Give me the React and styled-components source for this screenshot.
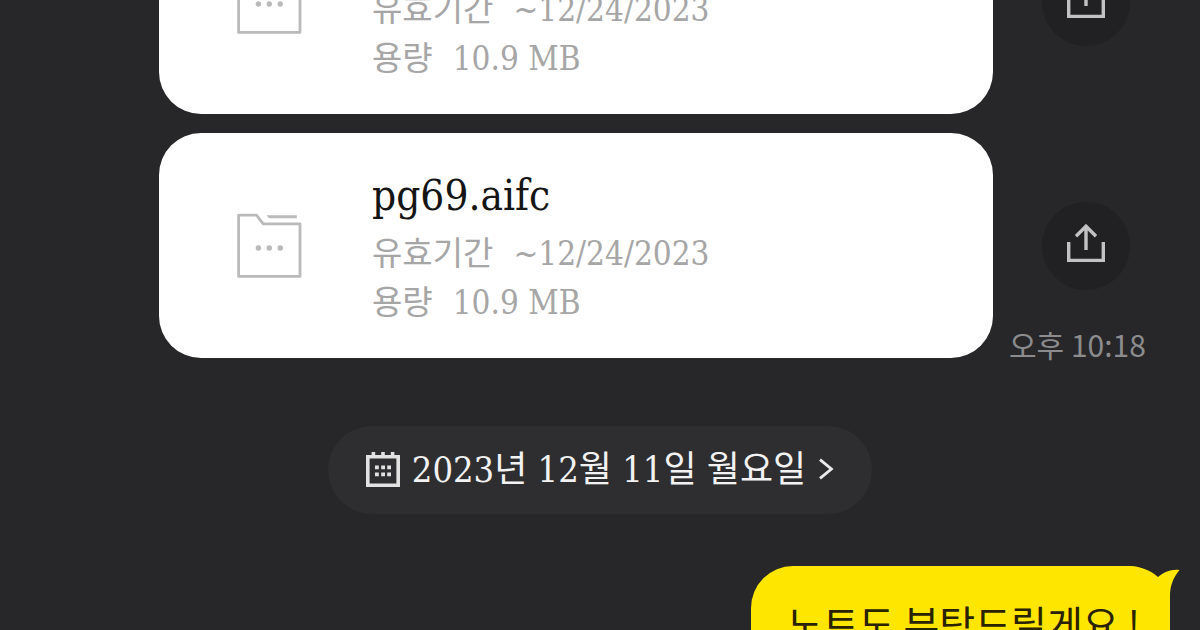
import React from "react";
import styled, { createGlobalStyle } from "styled-components";

const files = [
  { id: 1, name: "pg68.aifc", expires: "~12/24/2023", size: "10.9 MB" },
  { id: 2, name: "pg69.aifc", expires: "~12/24/2023", size: "10.9 MB", time: "오후 10:18" },
];

export default function App() {
  return (
    <>
      <GlobalStyle />
      <ChatRoom>
        <FileList>
          {files.map((file) => (
            <FileMessage key={file.id} file={file} />
          ))}
        </FileList>
        <DateButton type="button">
          <CalendarIcon />
          <span>2023년 12월 11일 월요일</span>
          <ChevronIcon />
        </DateButton>
        <MyMessage>
          노트도 부탁드릴게요 !
          <BubbleTail />
        </MyMessage>
      </ChatRoom>
    </>
  );
}

function FileMessage({ file }) {
  return (
    <FileRow>
      <FileCard>
        <FolderIcon />
        <div>
          <FileName>{file.name}</FileName>
          <FileInfo>
            <span>유효기간</span>
            <span>{file.expires}</span>
          </FileInfo>
          <FileInfo>
            <span>용량</span>
            <span>{file.size}</span>
          </FileInfo>
        </div>
      </FileCard>
      <FileSide>
        <ShareButton type="button" aria-label="공유">
          <ShareIcon />
        </ShareButton>
        {file.time && <Time>{file.time}</Time>}
      </FileSide>
    </FileRow>
  );
}

function FolderIcon() {
  return (
    <svg width="66" height="68" viewBox="0 0 66 68" fill="none" aria-hidden="true">
      <path
        d="M2.6 2.2H20.5L27.2 10.8H64V63.4H2.6Z"
        stroke="#bababa"
        strokeWidth="2.8"
        strokeLinejoin="round"
      />
      <path d="M30.6 2.2H60.8V5.2H33Z" fill="#bababa" />
      <circle cx="22.4" cy="35" r="2.7" fill="#bababa" />
      <circle cx="33.3" cy="35" r="2.7" fill="#bababa" />
      <circle cx="44.2" cy="35" r="2.7" fill="#bababa" />
    </svg>
  );
}

function ShareIcon() {
  return (
    <svg width="44" height="44" viewBox="0 0 44 44" fill="none" aria-hidden="true">
      <path
        d="M4.7 18V36.4H39.3V18M22 26V2.2M12 12.2L22 2.2L32 12.2"
        stroke="#c2c2c4"
        strokeWidth="3.4"
      />
    </svg>
  );
}

function CalendarIcon() {
  return (
    <svg width="34" height="36" viewBox="0 0 34 36" fill="none" aria-hidden="true">
      <path d="M1.8 4.8H32.2V33.2H1.8Z" stroke="#e2e2e2" strokeWidth="3.6" />
      <path
        d="M7.4 0V4M17 0V4M26.6 0V4"
        stroke="#e2e2e2"
        strokeWidth="3.6"
      />
      <path
        d="M9 15.4H12.8M15.2 15.4H19M21.2 15.4H25M9 22.4H12.8M15.2 22.4H19M21.2 22.4H25"
        stroke="#e2e2e2"
        strokeWidth="3.8"
      />
    </svg>
  );
}

function ChevronIcon() {
  return (
    <svg width="16" height="24" viewBox="0 0 16 24" fill="none" aria-hidden="true">
      <path d="M2 1.6L13.4 11L2 20.4" stroke="#ececec" strokeWidth="2.8" />
    </svg>
  );
}

function BubbleTail() {
  return (
    <Tail width="52" height="44" viewBox="0 0 52 44" aria-hidden="true">
      <path
        d="M0 0C12 0 22 4 30 11C36 6 43 3 51.5 4C45 12 42 20 42 30V44H0Z"
        fill="#ffe600"
      />
    </Tail>
  );
}

const GlobalStyle = createGlobalStyle`
  * {
    box-sizing: border-box;
  }
  body {
    margin: 0;
    background: #272729;
    font-family: "DejaVu Serif Condensed", "Noto Sans CJK KR", serif;
  }
  button {
    border: 0;
    padding: 0;
    font: inherit;
    cursor: pointer;
  }
`;

const ChatRoom = styled.main`
  display: flex;
  flex-direction: column;
  height: 100vh;
  overflow: hidden;
`;

/* scrolled so that the first card is cut by the top edge */
const FileList = styled.section`
  display: flex;
  flex-direction: column;
  flex-shrink: 0;
  gap: 19px;
  margin-top: -111px;
`;

const FileRow = styled.article`
  display: grid;
  grid-template-columns: 1fr 191px;
  gap: 16px;
  padding-left: 159px;
`;

const FileCard = styled.div`
  display: flex;
  align-items: center;
  gap: 70px;
  padding: 33px 77px 31px;
  border-radius: 42px;
  background: #ffffff;
`;

const FileName = styled.h2`
  margin: 0 0 3px;
  color: #151515;
  font-size: 42px;
  font-weight: 400;
  line-height: 60px;
`;

const FileInfo = styled.p`
  display: flex;
  gap: 20px;
  margin: 0;
  color: #a6a6a6;
  font-size: 33px;
  line-height: 49px;
`;

const FileSide = styled.div`
  display: grid;
  grid-template-rows: 1fr auto 1fr;
`;

const ShareButton = styled.button`
  display: flex;
  grid-row: 2;
  align-items: center;
  justify-content: center;
  width: 88px;
  height: 88px;
  margin-left: 33px;
  border-radius: 50%;
  background: #212123;
`;

const Time = styled.time`
  grid-row: 3;
  align-self: end;
  color: #8c8c8e;
  font-family: "Noto Sans CJK KR", sans-serif;
  font-size: 30px;
  line-height: 28px;
`;

const DateButton = styled.button`
  display: flex;
  flex-shrink: 0;
  align-items: center;
  align-self: center;
  gap: 12px;
  height: 88px;
  margin-top: 68px;
  padding: 0 38px;
  border-radius: 44px;
  background: #2e2e30;
  color: #f2f2f2;
  font-size: 36px;
  line-height: 48px;
`;

const MyMessage = styled.p`
  position: relative;
  flex-shrink: 0;
  align-self: flex-end;
  margin: 52px 30px 0 0;
  padding: 28px 30px 30px 36px;
  border-radius: 42px;
  background: #ffe600;
  color: #2b2300;
  font-family: "Noto Sans CJK KR", sans-serif;
  font-size: 39px;
  line-height: 56px;
`;

const Tail = styled.svg`
  position: absolute;
  top: 0;
  right: -10px;
`;
